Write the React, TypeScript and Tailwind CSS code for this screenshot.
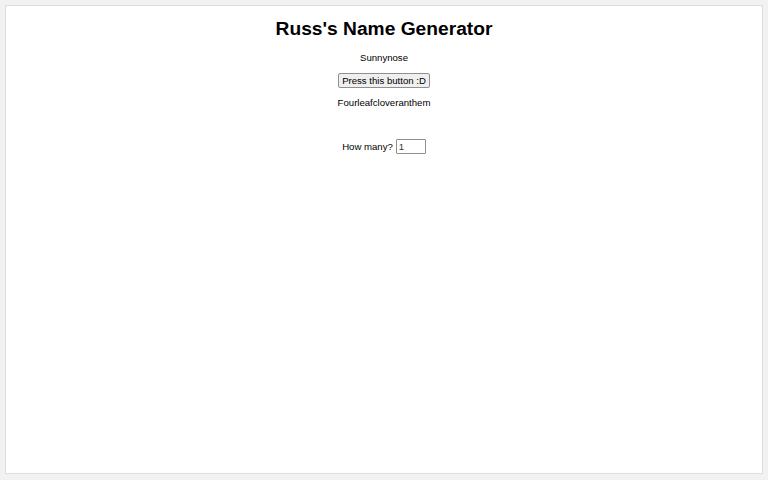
import React, { useState } from 'react';

const names = ['Sunnynose', 'Fourleafcloveranthem'];

export default function App() {
  const [count, setCount] = useState('1');

  return (
    <div className="h-screen w-full bg-[#f2f2f2] p-[5px] pb-[6px] flex" style={{ fontFamily: '"Liberation Sans", Arial, sans-serif' }}>
      <div className="flex-1 bg-white border border-[#dedede] flex flex-col items-center text-black">
        <h1 className="mt-[12px] text-[19.2px] leading-[22px] font-bold">Russ's Name Generator</h1>

        <p className="mt-[12px] text-[9.6px] leading-[11px]">{names[0]}</p>

        <button className="mt-[10px] h-[15px] px-[3.5px] text-[9.6px] leading-[11px] bg-[#efefef] border border-[#8f8f8f] rounded-[2px] text-black">
          Press this button :D
        </button>

        <p className="mt-[9px] text-[9.6px] leading-[11px]">{names[1]}</p>

        <label className="mt-[31px] flex items-center gap-[3px] text-[9.6px] leading-[11px]">
          How many?
          <input
            type="number"
            value={count}
            onChange={(e) => setCount(e.target.value)}
            className="w-[30px] h-[15px] px-[2px] text-[9.6px] text-[#333] border border-[#8f8f8f] rounded-[1px] outline-none [appearance:textfield] [&::-webkit-inner-spin-button]:appearance-none"
          />
        </label>
      </div>
    </div>
  );
}
